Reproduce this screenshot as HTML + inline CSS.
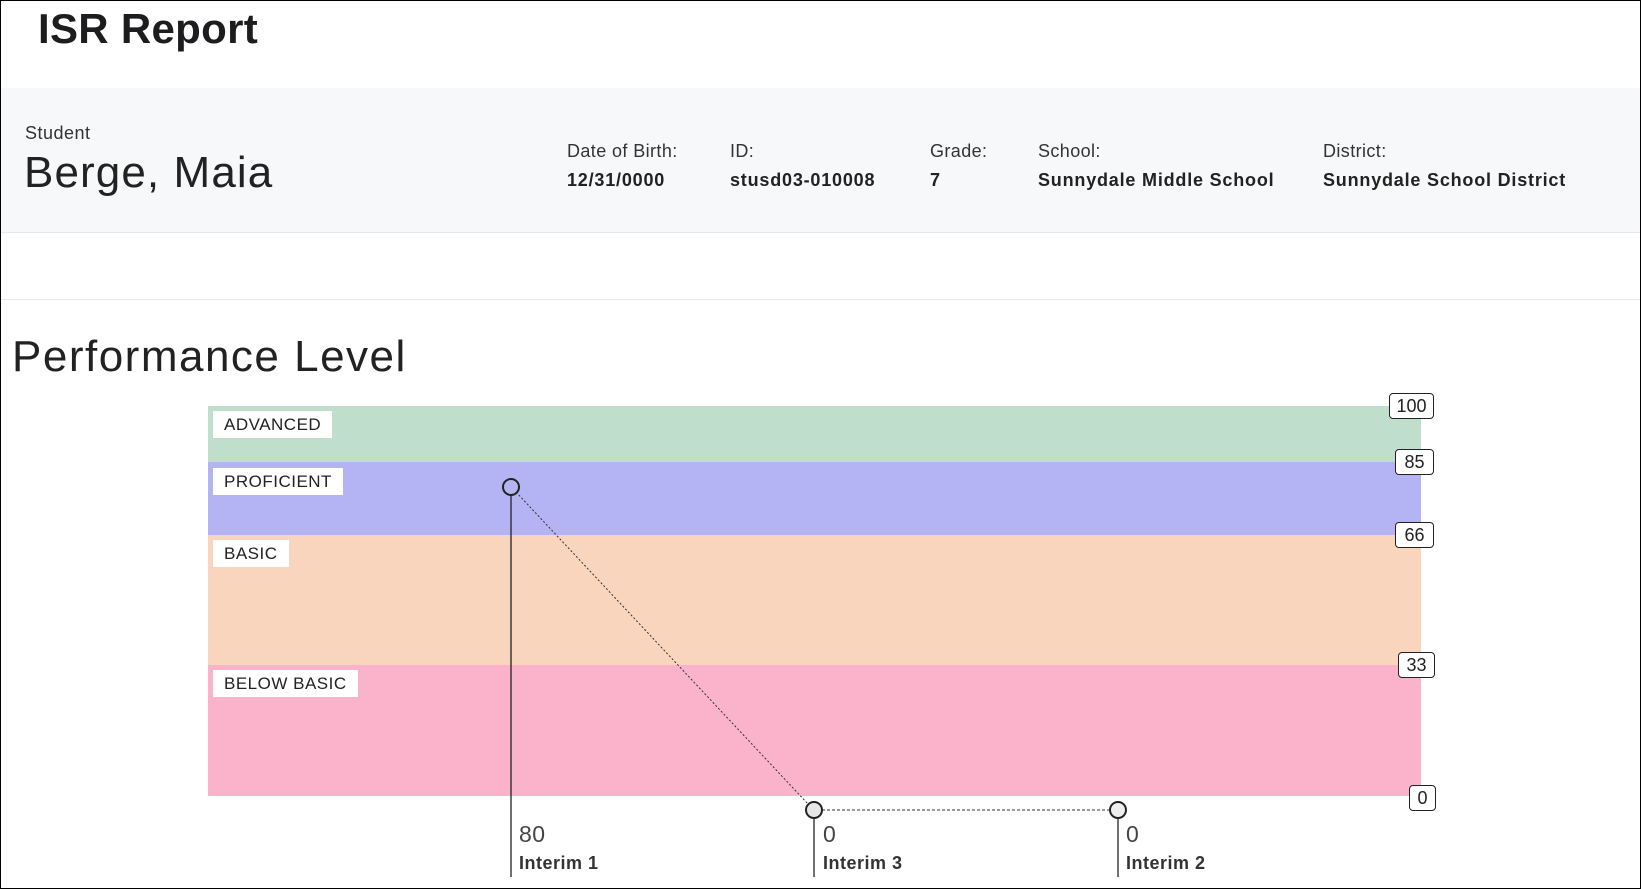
<!DOCTYPE html>
<html><head><meta charset="utf-8"><style>
html,body{margin:0;padding:0;}
body{width:1641px;height:889px;position:relative;overflow:hidden;background:#fff;font-family:"Liberation Sans",sans-serif;color:#222;}
.frame{position:absolute;left:0;top:0;width:1639px;height:887px;border:1px solid #000;}
.t{position:absolute;white-space:nowrap;}
.band{position:absolute;left:1px;top:88px;width:1639px;height:144px;background:#f7f8fa;border-bottom:1px solid #e6e8eb;}
.hr{position:absolute;left:1px;top:299px;width:1639px;height:1px;background:#e8e8e8;}
.lbl{font-size:18px;color:#333;letter-spacing:0.4px;}
.val{font-size:18px;font-weight:bold;color:#222;letter-spacing:0.8px;}
.lv{position:absolute;left:213px;background:#fff;font-size:17px;padding:0 11px;height:27px;line-height:27px;color:#222;letter-spacing:0.5px;}
.nb{position:absolute;background:#fff;border:1px solid #222;border-radius:4px;font-size:18px;height:24px;line-height:24px;text-align:center;}
</style></head><body>
<div class="frame"></div>
<div class="t" style="left:38px;top:5px;font-size:42px;font-weight:bold;color:#1d1d1f;letter-spacing:0.3px;">ISR Report</div>
<div class="band"></div>
<div class="t" style="left:25px;top:123px;font-size:18px;color:#333;letter-spacing:0.5px;">Student</div>
<div class="t" style="left:24px;top:148px;font-size:44px;color:#222;letter-spacing:1.1px;">Berge, Maia</div>
<div class="t lbl" style="left:567px;top:141px;">Date of Birth:</div>
<div class="t val" style="left:567px;top:170px;">12/31/0000</div>
<div class="t lbl" style="left:730px;top:141px;">ID:</div>
<div class="t val" style="left:730px;top:170px;">stusd03-010008</div>
<div class="t lbl" style="left:930px;top:141px;">Grade:</div>
<div class="t val" style="left:930px;top:170px;">7</div>
<div class="t lbl" style="left:1038px;top:141px;">School:</div>
<div class="t val" style="left:1038px;top:170px;">Sunnydale Middle School</div>
<div class="t lbl" style="left:1323px;top:141px;">District:</div>
<div class="t val" style="left:1323px;top:170px;">Sunnydale School District</div>
<div class="hr"></div>
<div class="t" style="left:12px;top:332px;font-size:44px;color:#222;letter-spacing:1.5px;">Performance Level</div>

<div style="position:absolute;left:208px;top:406px;width:1213px;height:56px;background:#c0decc;"></div>
<div style="position:absolute;left:208px;top:462px;width:1213px;height:73px;background:#b4b3f3;"></div>
<div style="position:absolute;left:208px;top:535px;width:1213px;height:130px;background:#fad5be;"></div>
<div style="position:absolute;left:208px;top:665px;width:1213px;height:131px;background:#fbb3cb;"></div>

<div class="lv" style="top:411px;">ADVANCED</div>
<div class="lv" style="top:468px;">PROFICIENT</div>
<div class="lv" style="top:540px;">BASIC</div>
<div class="lv" style="top:670px;">BELOW BASIC</div>

<div class="nb" style="left:1389px;top:393px;width:43px;">100</div>
<div class="nb" style="left:1395px;top:449px;width:37px;">85</div>
<div class="nb" style="left:1395px;top:522px;width:37px;">66</div>
<div class="nb" style="left:1398px;top:652px;width:35px;">33</div>
<div class="nb" style="left:1409px;top:785px;width:25px;">0</div>

<svg style="position:absolute;left:0;top:0" width="1641" height="889">
<line x1="511" y1="494" x2="511" y2="877" stroke="#222" stroke-width="1.3"/>
<line x1="814" y1="818" x2="814" y2="877" stroke="#222" stroke-width="1.3"/>
<line x1="1118" y1="818" x2="1118" y2="877" stroke="#222" stroke-width="1.3"/>
<line x1="516" y1="492" x2="808" y2="804" stroke="#333" stroke-width="1" stroke-dasharray="2,2"/>
<line x1="822" y1="810" x2="1110" y2="810" stroke="#333" stroke-width="1" stroke-dasharray="3,2"/>
<circle cx="511" cy="487" r="8" fill="none" stroke="#222" stroke-width="2"/>
<circle cx="814" cy="810" r="8" fill="#e6e6e6" stroke="#222" stroke-width="2"/>
<circle cx="1118" cy="810" r="8" fill="#eee" stroke="#222" stroke-width="2"/>
</svg>
<div class="t" style="left:519px;top:821px;font-size:23px;color:#444;letter-spacing:0.5px;">80</div>
<div class="t" style="left:519px;top:853px;font-size:18px;font-weight:bold;color:#333;letter-spacing:0.5px;">Interim 1</div>
<div class="t" style="left:823px;top:821px;font-size:23px;color:#444;">0</div>
<div class="t" style="left:823px;top:853px;font-size:18px;font-weight:bold;color:#333;letter-spacing:0.5px;">Interim 3</div>
<div class="t" style="left:1126px;top:821px;font-size:23px;color:#444;">0</div>
<div class="t" style="left:1126px;top:853px;font-size:18px;font-weight:bold;color:#333;letter-spacing:0.5px;">Interim 2</div>
</body></html>
